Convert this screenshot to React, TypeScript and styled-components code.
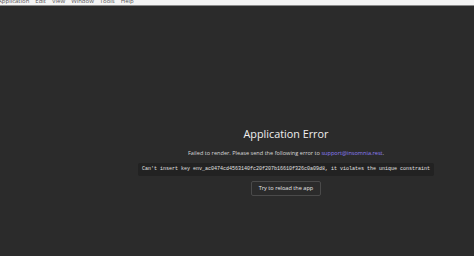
import * as React from 'react';
import styled, { createGlobalStyle } from 'styled-components';

const GlobalStyle = createGlobalStyle`
html, body {
  margin: 0;
  height: 100%;
  background: #2b2b2b;
}
#root {
  height: 100%;
}
`;

const Frame = styled.div`
height: 100%;
display: flex;
flex-direction: column;
font-family: "Open Sans", "Noto Sans", sans-serif;
`;

const MenuBar = styled.div`
height: 5px;
background: #f4f4f4;
border-bottom: 1px solid #8a8a8a;
overflow: hidden;
display: flex;
gap: 6px;
padding-left: 0;
`;

const MenuItem = styled.span`
font: 6px "Open Sans", sans-serif;
color: #555;
line-height: 6px;
margin-top: -2px;
white-space: nowrap;
&:first-child {
  margin-left: -2px;
}
`;

const Main = styled.div`
flex: 1;
display: flex;
flex-direction: column;
align-items: center;
padding: 120px 0 0 98px;
`;

const Title = styled.h1`
margin: 0;
font-weight: 400;
font-size: 10.8px;
line-height: 16px;
color: #f0f0f0;
`;

const Message = styled.p`
margin: 7px 0 0;
font-size: 5.6px;
line-height: 8px;
color: #d8d8d8;
`;

const Link = styled.a`
color: #8b7df5;
text-decoration: none;
`;

const Code = styled.pre`
margin: 6px 0 0;
padding: 3px 4px;
background: #222;
border-radius: 2px;
font: 5px "Liberation Mono", "DejaVu Sans Mono", monospace;
line-height: 7px;
color: #e4e4e4;
`;

const ReloadButton = styled.button`
margin-top: 5px;
padding: 3px 7px;
background: #2b2b2b;
border: 1px solid #4a4a4a;
border-radius: 2px;
font: 5.6px "Open Sans", sans-serif;
line-height: 7px;
color: #e6e6e6;
`;

const menus = ['Application', 'Edit', 'View', 'Window', 'Tools', 'Help'];

export default function App() {
  return (
    <Frame>
      <GlobalStyle />
      <MenuBar>
        {menus.map(m => <MenuItem key={m}>{m}</MenuItem>)}
      </MenuBar>
      <Main>
        <Title>Application Error</Title>
        <Message>
          Failed to render. Please send the following error to <Link href="#">support@insomnia.rest</Link>.
        </Message>
        <Code>Can't insert key env_ac0474cd4563140fc20f207b16610f326c0a09d8, it violates the unique constraint</Code>
        <ReloadButton>Try to reload the app</ReloadButton>
      </Main>
    </Frame>
  );
}
